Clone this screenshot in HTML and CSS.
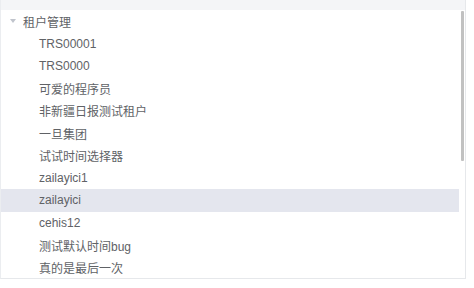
FILE: index.html
```html
<!DOCTYPE html>
<html lang="zh">
<head>
<meta charset="utf-8">
<link rel="stylesheet" href="styles.css">
</head>
<body>
<div class="panel">
  <div class="topstrip"></div>
  <div class="tree">
    <div class="row parent">
      <span class="caret"></span>
      <span class="label">租户管理</span>
    </div>
    <div class="row child"><span class="label">TRS00001</span></div>
    <div class="row child"><span class="label">TRS0000</span></div>
    <div class="row child"><span class="label">可爱的程序员</span></div>
    <div class="row child"><span class="label">非新疆日报测试租户</span></div>
    <div class="row child"><span class="label">一旦集团</span></div>
    <div class="row child"><span class="label">试试时间选择器</span></div>
    <div class="row child"><span class="label">zailayici1</span></div>
    <div class="row child current"><span class="label">zailayici</span></div>
    <div class="row child"><span class="label">cehis12</span></div>
    <div class="row child"><span class="label">测试默认时间bug</span></div>
    <div class="row child"><span class="label">真的是最后一次</span></div>
    <div class="scrollthumb"></div>
  </div>
</div>
</body>
</html>
```

FILE: styles.css
```css
html, body {
  margin: 0;
  padding: 0;
  background: #ffffff;
}
body {
  font-family: "Liberation Sans", "Noto Sans CJK SC", sans-serif;
  font-size: 12px;
  color: #606266;
}
.panel {
  width: 466px;
  height: 279px;
  box-sizing: border-box;
  border-left: 1px solid #ebedf0;
  border-right: 1px solid #e6e8eb;
  border-bottom: 1px solid #e6e8eb;
  display: flex;
  flex-direction: column;
}
.topstrip {
  height: 10px;
  background: #f4f5f7;
  flex: none;
}
.tree {
  position: relative;
  flex: 1;
  overflow: hidden;
}
.row {
  height: 22.4px;
  display: flex;
  align-items: center;
  margin-right: 6px;
  white-space: nowrap;
}
.parent {
  padding-left: 9px;
}
.caret {
  width: 0;
  height: 0;
  border-left: 3.5px solid transparent;
  border-right: 3.5px solid transparent;
  border-top: 4px solid #c0c4cc;
  margin-right: 7px;
}
.child {
  padding-left: 38px;
}
.current {
  background: #e4e6ee;
}
.scrollthumb {
  position: absolute;
  right: 1px;
  top: 1px;
  width: 3px;
  height: 150px;
  background: #c1c1c1;
  border-radius: 1px;
}
```
